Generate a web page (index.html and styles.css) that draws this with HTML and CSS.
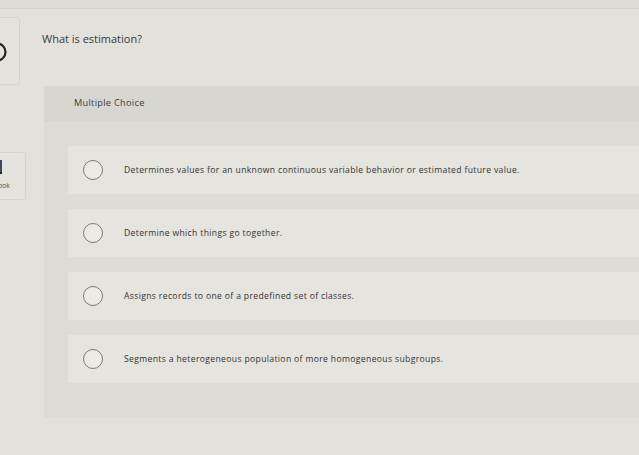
FILE: index.html
```html
<!DOCTYPE html>
<html>
<head>
<meta charset="utf-8">
<link rel="stylesheet" href="styles.css">
</head>
<body>
<div class="topbar"></div>
<div class="layout">
  <aside class="sidebar">
    <div class="side-card side-card-1">
      <svg class="side-icon" width="30" height="24" viewBox="0 0 30 24"><circle cx="12" cy="12" r="8.5" fill="none" stroke="#222" stroke-width="2.2"/><path d="M4 20 L2 14" stroke="#222" stroke-width="2" fill="none"/></svg>
    </div>
    <div class="side-card side-card-2">
      <svg class="book" width="14" height="16" viewBox="0 0 14 16"><rect x="1" y="1" width="12" height="13" fill="#3a4a66"/><rect x="3" y="3" width="8" height="9" fill="#c9ced8"/><rect x="1" y="13" width="12" height="2" fill="#222"/></svg>
      <span class="side-label">eBook</span>
    </div>
  </aside>
  <main class="main">
    <h1 class="question">What is estimation?</h1>
    <section class="panel">
      <div class="panel-head">Multiple Choice</div>
      <div class="panel-body">
        <div class="option"><span class="radio"></span><span class="opt-text">Determines values for an unknown continuous variable behavior or estimated future value.</span></div>
        <div class="option"><span class="radio"></span><span class="opt-text">Determine which things go together.</span></div>
        <div class="option"><span class="radio"></span><span class="opt-text">Assigns records to one of a predefined set of classes.</span></div>
        <div class="option"><span class="radio"></span><span class="opt-text">Segments a heterogeneous population of more homogeneous subgroups.</span></div>
      </div>
    </section>
  </main>
</div>
</body>
</html>
```
FILE: styles.css
```css
html, body {
  margin: 0;
  padding: 0;
  height: 100%;
  overflow: hidden;
}
body {
  background: #e2e1db;
  font-family: "Open Sans", Lato, sans-serif;
  color: #3b3b3b;
}
.topbar {
  height: 8px;
  background: #dcdbd5;
  border-bottom: 1px solid #d2d1cb;
}
.layout {
  display: flex;
  height: 446px;
}
.sidebar {
  width: 22px;
  flex: none;
  display: flex;
  flex-direction: column;
  overflow: visible;
}
.side-card {
  margin-left: -50px;
  background: #e4e3de;
  border: 1px solid #d3d2cc;
  border-radius: 3px;
  box-sizing: border-box;
  position: relative;
}
.side-card-1 {
  margin-top: 8px;
  width: 70px;
  height: 68px;
}
.side-icon {
  position: absolute;
  left: 34px;
  top: 22px;
}
.side-card-2 {
  margin-top: 67px;
  width: 76px;
  height: 48px;
  display: flex;
  flex-direction: column;
  align-items: flex-end;
  padding-right: 15px;
  padding-top: 6px;
}
.book {
  margin-right: 7px;
}
.side-label {
  font-size: 7px;
  color: #555;
  margin-top: 6px;
}
.main {
  flex: 1;
  min-width: 0;
}
.question {
  margin: 22px 0 0 20px;
  font-size: 11px;
  font-weight: normal;
  color: #3a3a3a;
  height: 16px;
  line-height: 16px;
}
.panel {
  margin-top: 39px;
  margin-left: 22px;
  background: #dcdbd5;
  height: 332px;
}
.panel-head {
  height: 36px;
  background: #d7d6d0;
  padding-left: 30px;
  font-size: 9.2px;
  letter-spacing: 0.3px;
  line-height: 34px;
  color: #3d3d3d;
}
.panel-body {
  padding: 24px 0 0 24px;
  display: flex;
  flex-direction: column;
  gap: 15px;
}
.option {
  height: 48px;
  background: #e5e4df;
  display: flex;
  align-items: center;
  padding-left: 15px;
}
.radio {
  width: 18px;
  height: 18px;
  border: 1.5px solid #7a7a7a;
  border-radius: 50%;
  background: #ebeae6;
  flex: none;
}
.opt-text {
  margin-left: 21px;
  font-size: 8.6px;
  letter-spacing: 0.35px;
  color: #333;
}
```
